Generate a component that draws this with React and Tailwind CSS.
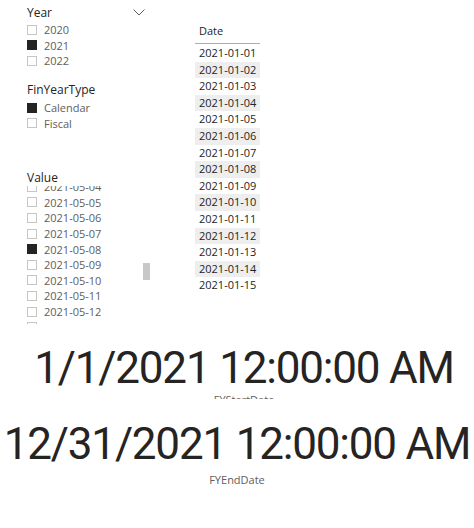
const ui = { fontFamily: '"Open Sans", "Noto Sans", sans-serif' }
const big = { fontFamily: 'Roboto, "DejaVu Sans", sans-serif', letterSpacing: '-1.2px' }

const VALUES = ['2021-05-04', '2021-05-05', '2021-05-06', '2021-05-07', '2021-05-08',
                '2021-05-09', '2021-05-10', '2021-05-11', '2021-05-12', '2021-05-13']
const DATES = Array.from({ length: 15 }, (_, i) => `2021-01-${String(i + 1).padStart(2, '0')}`)

function Item({ label, on }) {
  return (
    <div className="flex items-center h-[15.6px] gap-[7px]">
      <div className={`w-[10px] h-[10px] border ${on ? 'bg-[#252423] border-[#252423]' : 'bg-white border-[#c8c6c4]'}`} />
      <span className="text-[11px] leading-none text-[#605e5c]">{label}</span>
    </div>
  )
}

export default function App() {
  return (
    <div className="w-[474px] h-[528px] bg-white overflow-hidden" style={ui}>
      {/* Slicers + table */}
      <div className="flex h-[330px]">
        <div className="w-[168px] pl-[27px] pt-[5px]">
          {/* Year */}
          <div className="flex items-center justify-between h-[15px] pr-[23px]">
            <span className="text-[12px] font-medium text-[#252423]">Year</span>
            <svg width="12" height="7" viewBox="0 0 12 7">
              <polyline points="0.5,0.5 6,6 11.5,0.5" fill="none" stroke="#605e5c" strokeWidth="1" />
            </svg>
          </div>
          <div className="mt-[2px]">
            <Item label="2020" />
            <Item label="2021" on />
            <Item label="2022" />
          </div>

          {/* FinYearType */}
          <div className="mt-[14px] h-[15px] flex items-center">
            <span className="text-[12px] font-medium text-[#252423]">FinYearType</span>
          </div>
          <div className="mt-[2px]">
            <Item label="Calendar" on />
            <Item label="Fiscal" />
          </div>

          {/* Value */}
          <div className="mt-[40px] h-[14px] flex items-center">
            <span className="text-[12px] font-medium text-[#252423]">Value</span>
          </div>
          <div className="flex mt-[1px]">
            <div className="h-[138px] overflow-hidden w-[110px]">
              <div className="-mt-[7px]">
                {VALUES.map(v => <Item key={v} label={v} on={v === '2021-05-08'} />)}
              </div>
            </div>
            <div className="ml-[6px] mt-[77px] w-[7px] h-[17px] bg-[#c8c8c8]" />
          </div>
        </div>

        {/* Date table */}
        <div className="ml-[27px] pt-[24px]">
          <div className="w-[65px] h-[20px] pl-[4px] border-b border-[#8ab4e8] text-[11px] text-[#252423] leading-[14px]">
            Date
          </div>
          <div className="mt-[1px]">
            {DATES.map((d, i) => (
              <div key={d} className={`w-[65px] h-[16.6px] pl-[4px] flex items-center text-[11px] text-[#252423] ${i % 2 ? 'bg-[#eeeeee]' : ''}`}>
                {d}
              </div>
            ))}
          </div>
        </div>
      </div>

      {/* Cards */}
      <div className="h-[69px] overflow-hidden flex flex-col items-center pl-[14px] pt-[8px]" style={big}>
        <div className="text-[44px] leading-[60px] text-[#252423] whitespace-nowrap">1/1/2021 12:00:00 AM</div>
        <div className="text-[11px] text-[#605e5c] -mt-[6px] tracking-normal" style={ui}>FYStartDate</div>
      </div>
      <div className="mt-[15px] flex flex-col items-center" style={big}>
        <div className="text-[44px] leading-[60px] text-[#252423] whitespace-nowrap">12/31/2021 12:00:00 AM</div>
        <div className="text-[11px] text-[#605e5c] -mt-[2px] tracking-normal" style={ui}>FYEndDate</div>
      </div>
    </div>
  )
}
